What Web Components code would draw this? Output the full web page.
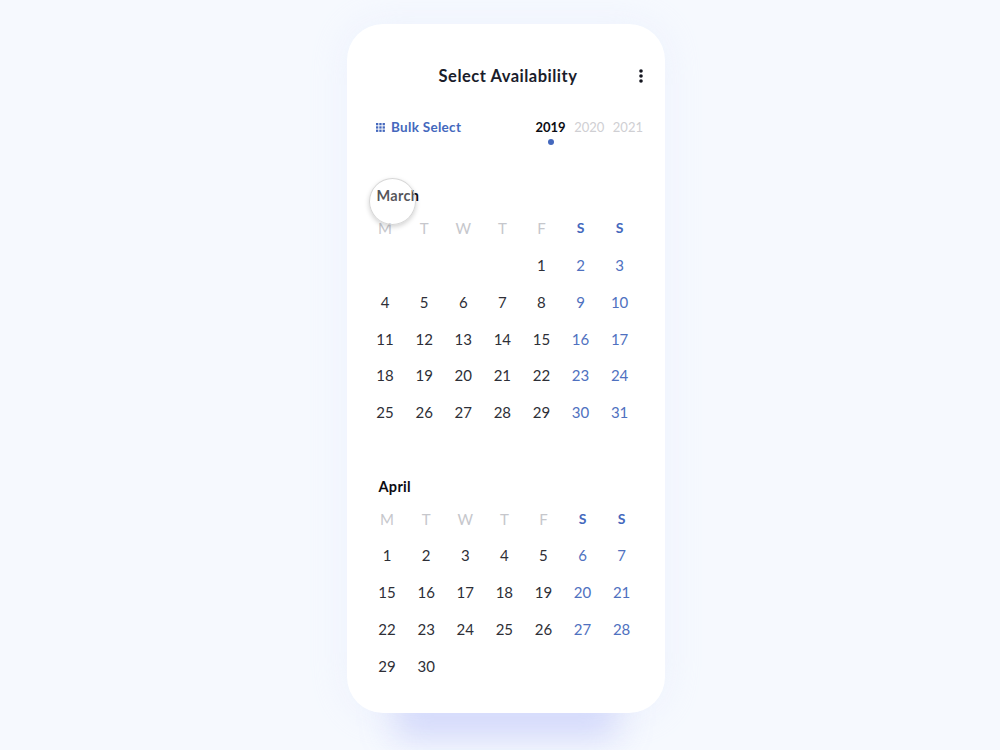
<!DOCTYPE html>
<html>
<head>
<meta charset="utf-8">
<style>
  html, body { margin: 0; height: 750px; overflow: hidden; background: #f6f9fe; }
  body { font-family: "Lato", "Liberation Sans", sans-serif; }
</style>
</head>
<body>
<avail-card>
  <avail-header></avail-header>
  <avail-toolbar></avail-toolbar>
  <month-grid name="March" first="4" days="31" style="margin: 39px 0 0 18.5px"></month-grid>
  <month-grid name="April" first="0" days="30" skip="8-14" style="margin: 43.5px 0 0 20.5px"></month-grid>
  <touch-dot></touch-dot>
</avail-card>

<script>
// page frame: white card with soft periwinkle shadow
class AvailCard extends HTMLElement {
    constructor() {
        super();
        this.attachShadow({ mode: 'open' });
        this.shadowRoot.innerHTML = `
            <style>
                :host {
                    display: block;
                    position: relative;
                    box-sizing: border-box;
                    width: 318px;
                    height: 689px;
                    margin: 24px 0 0 347px;
                    background: #fff;
                    border-radius: 36px;
                    box-shadow: 0 0 36px rgba(226, 233, 252, .45), 0 72px 32px -48px rgba(200, 206, 250, .8);
                }
            </style>
            <slot></slot>
        `;
    }
}

class AvailHeader extends HTMLElement {
    constructor() {
        super();
        this.attachShadow({ mode: 'open' });
        this.shadowRoot.innerHTML = `
            <style>
                :host {
                    display: flex;
                    justify-content: center;
                    align-items: center;
                    position: relative;
                    height: 24px;
                    padding-top: 40px;
                    padding-left: 4px;
                    color: #1a1d2b;
                    font: 700 16.5px/24px "Lato", sans-serif;
                    letter-spacing: .5px;
                }
                svg { position: absolute; right: 22px; top: 45px; }
            </style>
            <span>Select Availability</span>
            <svg width="4" height="14" viewBox="0 0 4 14" fill="#14161f">
                <circle cx="2" cy="2" r="1.8"/><circle cx="2" cy="7" r="1.8"/><circle cx="2" cy="12" r="1.8"/>
            </svg>
        `;
    }
}

class AvailToolbar extends HTMLElement {
    constructor() {
        super();
        this.attachShadow({ mode: 'open' });
        this.shadowRoot.innerHTML = `
            <style>
                :host {
                    display: flex;
                    justify-content: space-between;
                    align-items: flex-start;
                    padding: 29px 22px 0 29px;
                    font: 700 13.5px/20px "Lato", sans-serif;
                }
                .bulk { display: flex; align-items: center; gap: 6px; color: #4468bd; letter-spacing: .3px; }
                .years { display: flex; gap: 8.5px; font-size: 13px; font-weight: 400; color: #cfcfd3; }
                .year { display: flex; flex-direction: column; align-items: center; }
                .on { color: #0c0c12; font-weight: 700; }
                .on::after { content: ""; width: 6px; height: 6px; margin-top: 2px; border-radius: 50%; background: #4468bd; }
            </style>
            <div class="bulk">
                <svg width="9" height="9" viewBox="0 0 9 9" fill="#4468bd">
                    <rect width="2.3" height="2.3"/><rect x="3.3" width="2.3" height="2.3"/><rect x="6.6" width="2.3" height="2.3"/>
                    <rect y="3.3" width="2.3" height="2.3"/><rect x="3.3" y="3.3" width="2.3" height="2.3"/><rect x="6.6" y="3.3" width="2.3" height="2.3"/>
                    <rect y="6.6" width="2.3" height="2.3"/><rect x="3.3" y="6.6" width="2.3" height="2.3"/><rect x="6.6" y="6.6" width="2.3" height="2.3"/>
                </svg>
                <span>Bulk Select</span>
            </div>
            <div class="years">
                <span class="year on">2019</span><span class="year">2020</span><span class="year">2021</span>
            </div>
        `;
    }
}

class MonthGrid extends HTMLElement {
    constructor() {
        super();
        this.attachShadow({ mode: 'open' });
    }

    connectedCallback() {
        const first = Number(this.getAttribute('first'));
        const days = Number(this.getAttribute('days'));
        const [skipFrom, skipTo] = (this.getAttribute('skip') || '0-0').split('-').map(Number);
        let cells = '';
        ['M', 'T', 'W', 'T', 'F', 'S', 'S'].forEach((d, i) => {
            cells += `<span class="head ${i > 4 ? 'end' : ''}">${d}</span>`;
        });
        for (let i = 0; i < first; i++) cells += '<span></span>';
        for (let d = 1; d <= days; d++) {
            if (d >= skipFrom && d <= skipTo) continue;
            const col = (first + d - 1) % 7;
            cells += `<span class="${col > 4 ? 'wk' : ''}">${d}</span>`;
        }
        this.shadowRoot.innerHTML = `
            <style>
                :host { display: block; width: 274px; }
                h3 {
                    margin: 0 0 0 11px;
                    height: 24px;
                    font: 700 14.5px/24px "Lato", sans-serif;
                    letter-spacing: .3px;
                    color: #0c0c12;
                }
                .grid {
                    display: grid;
                    grid-template-columns: repeat(7, 39.1px);
                    grid-auto-rows: 36.85px;
                    margin-top: 2px;
                    font: 400 15px/36.85px "Lato", sans-serif;
                    text-align: center;
                    color: #2e2f37;
                }
                .head { font-size: 15px; color: #c6c7cc; }
                .head.end { font-weight: 700; font-size: 14px; color: #4468bd; }
                .wk { color: #4f71c0; }
            </style>
            <h3>${this.getAttribute('name')}</h3>
            <div class="grid">${cells}</div>
        `;
    }
}

// touch indicator lying over the month title
class TouchDot extends HTMLElement {
    constructor() {
        super();
        this.attachShadow({ mode: 'open' });
        this.shadowRoot.innerHTML = `
            <style>
                :host {
                    position: absolute;
                    left: 22px;
                    top: 154px;
                    width: 45px;
                    height: 45px;
                    border-radius: 50%;
                    background: rgba(255, 255, 255, .3);
                    border: 1px solid rgba(205, 205, 205, .8);
                    box-shadow: 0 2px 5px rgba(0, 0, 0, .18);
                }
            </style>
        `;
    }
}

customElements.define('avail-card', AvailCard);
customElements.define('avail-header', AvailHeader);
customElements.define('avail-toolbar', AvailToolbar);
customElements.define('month-grid', MonthGrid);
customElements.define('touch-dot', TouchDot);
</script>
</body>
</html>
